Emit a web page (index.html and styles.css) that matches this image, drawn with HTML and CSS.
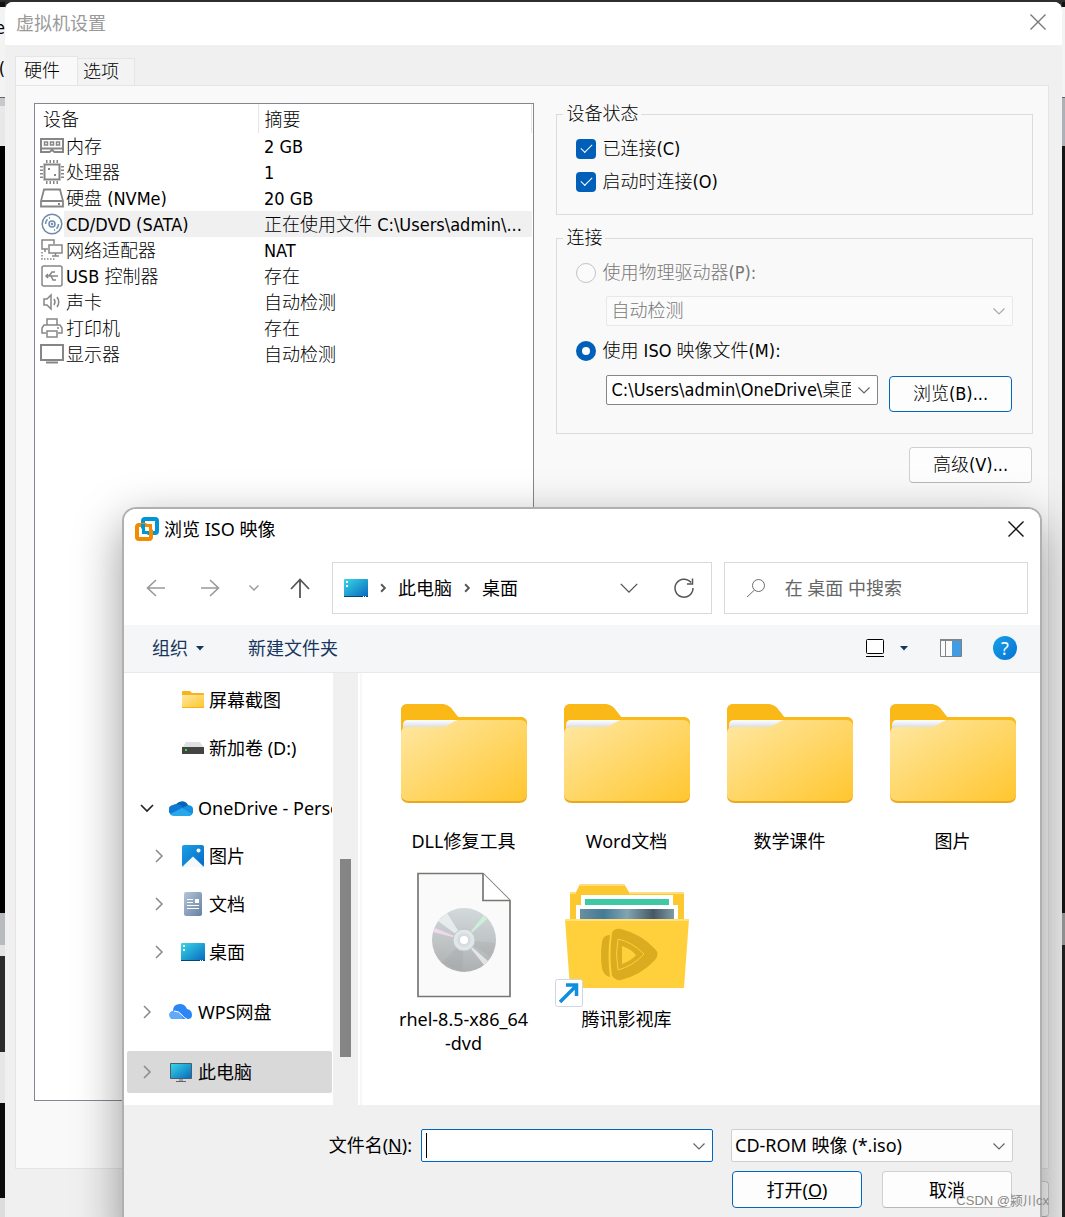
FILE: index.html
```html
<!DOCTYPE html>
<html lang="zh-CN">
<head>
    <meta charset="UTF-8">
    <meta name="viewport" content="width=device-width, initial-scale=1.0">
    <title>虚拟机设置</title>
    <link rel="stylesheet" href="styles.css">
</head>
<body>
    <!-- shared drawings -->
    <svg class="defs" width="0" height="0" aria-hidden="true">
        <defs>
            <linearGradient id="g-folder" x1="0" y1="0" x2="1" y2="1">
                <stop offset="0" stop-color="#ffe8a3"/>
                <stop offset="1" stop-color="#ffc62f"/>
            </linearGradient>
            <linearGradient id="g-paper" x1="0" y1="0" x2="0" y2="1">
                <stop offset="0" stop-color="#ffffff"/>
                <stop offset=".4" stop-color="#d3d9e0"/>
            </linearGradient>
            <linearGradient id="g-desk" x1="0" y1="0" x2="1" y2="1">
                <stop offset="0" stop-color="#38d8e8"/>
                <stop offset="1" stop-color="#0767bd"/>
            </linearGradient>
            <linearGradient id="g-blue" x1="0" y1="0" x2="1" y2="1">
                <stop offset="0" stop-color="#1ba0e8"/>
                <stop offset="1" stop-color="#0668c4"/>
            </linearGradient>
            <linearGradient id="g-doc" x1="0" y1="0" x2="1" y2="1">
                <stop offset="0" stop-color="#b4c5d8"/>
                <stop offset="1" stop-color="#6581a3"/>
            </linearGradient>
            <linearGradient id="g-disc" x1="0" y1="0" x2="0" y2="1">
                <stop offset="0" stop-color="#d3dadb"/>
                <stop offset="1" stop-color="#adb0b1"/>
            </linearGradient>
            <linearGradient id="g-film" x1="0" y1="0" x2="1" y2="0">
                <stop offset="0" stop-color="#6a8ea0"/>
                <stop offset=".25" stop-color="#437b96"/>
                <stop offset=".5" stop-color="#82a4b4"/>
                <stop offset=".78" stop-color="#455964"/>
                <stop offset="1" stop-color="#7f9ba8"/>
            </linearGradient>
            <symbol id="i-folder" viewBox="0 0 128 128">
                <path d="M1 40V18q0-7 7-7h32q7 0 11 4l7 9h62q7 0 7 7v71q0 8-8 8H9q-8 0-8-8z" fill="#e9a91f"/>
                <path d="M1 40V18q0-7 7-7h32q7 0 11 4l7 9h62q7 0 7 7v20H1z" fill="#fbb917"/>
                <path d="M3 48V32q0-5 5-5h50l-8 10z" fill="url(#g-paper)"/>
                <path d="M1 40q0-6 7-6h33q5 0 9-3l5-3q2-1 5-1h60q7 0 7 7v67q0 7-8 7H9q-8 0-8-7z" fill="url(#g-folder)"/>
            </symbol>
            <symbol id="i-desk" viewBox="0 0 24 24">
                <rect y="3" width="24" height="18" rx="1" fill="url(#g-desk)"/>
                <path d="M0 20h24v1H0z" fill="#0a4278"/>
                <path d="M2 5h2v2H2zM2 9h2v2H2zM19 20h1v1h-1zM21 20h1v1h-1z" fill="#fff"/>
            </symbol>
            <symbol id="i-down" viewBox="0 0 16 16">
                <path d="M2.500 5.500 8 11l5.500-5.500" fill="none" stroke="currentColor" stroke-width="1.200"/>
            </symbol>
            <symbol id="i-right" viewBox="0 0 16 16">
                <path d="M5 2l6 6-6 6" fill="none" stroke="currentColor" stroke-width="1.500"/>
            </symbol>
            <symbol id="i-close" viewBox="0 0 16 16">
                <path d="M.5.5l15 15M15.500.5l-15 15" fill="none" stroke="currentColor" stroke-width="1.400"/>
            </symbol>
        </defs>
    </svg>

    <div class="desktop">
        <div class="strip strip-left" aria-hidden="true"><span>e</span><span>(</span></div>

        <main class="settings">
            <header class="settings-title">
                <h1>虚拟机设置</h1>
                <button class="icon-btn" type="button" aria-label="关闭"><svg width="16" height="16"><use href="#i-close"/></svg></button>
            </header>

            <div class="tabs" role="tablist">
                <button class="tab active" type="button" role="tab" aria-selected="true">硬件</button>
                <button class="tab" type="button" role="tab" aria-selected="false">选项</button>
            </div>

            <div class="panel">
                <div class="devices">
                    <table>
                        <thead>
                            <tr><th class="name-col">设备</th><th>摘要</th></tr>
                        </thead>
                        <tbody>
                            <tr>
                                <td><div class="dev"><svg width="24" height="24" viewBox="0 0 24 24" fill="none" stroke="#868686" stroke-width="2"><path d="M1 5h22v13h-8.500l-2.500-2-2.500 2H1zM1 14.500h22"/><path d="M4.500 8h3v3h-3zM10.500 8h3v3h-3zM16.500 8h3v3h-3z" stroke-width="1.500"/></svg><span>内存</span></div></td>
                                <td>2 GB</td>
                            </tr>
                            <tr>
                                <td><div class="dev"><svg width="24" height="24" viewBox="0 0 24 24" fill="none" stroke="#868686" stroke-width="2"><path d="M4.500 4.500h15v15h-15z"/><path d="M6 1.500h13M6 22.500h13M1.500 6v13M22.500 6v13" stroke-width="3" stroke-dasharray="1.500 2"/><path d="M8 9h2M14 15h2"/></svg><span>处理器</span></div></td>
                                <td>1</td>
                            </tr>
                            <tr>
                                <td><div class="dev"><svg width="24" height="24" viewBox="0 0 24 24" fill="none" stroke="#868686" stroke-width="1.800"><path d="M4 3.500h16l3 11.500v5.500H1V15zM1 15h22M18 18h2"/></svg><span>硬盘 (NVMe)</span></div></td>
                                <td>20 GB</td>
                            </tr>
                            <tr class="selected">
                                <td><div class="dev"><svg width="24" height="24" viewBox="0 0 24 24" fill="none" stroke="#6d8ca8" stroke-width="1.500"><circle cx="12" cy="12" r="9.800"/><circle cx="12" cy="12" r="3"/><circle cx="12" cy="12" r=".5"/><path d="M5.500 12a6.500 6.500 0 0 1 2-4.700M9 6.200l1-.4M18.500 12a6.500 6.500 0 0 1-2 4.700M15 17.800l-1 .4"/></svg><span>CD/DVD (SATA)</span></div></td>
                                <td>正在使用文件 C:\Users\admin\...</td>
                            </tr>
                            <tr>
                                <td><div class="dev"><svg width="24" height="24" viewBox="0 0 24 24" fill="none" stroke="#868686" stroke-width="1.500"><path d="M8 11H2V2h12v4M5 14v-3M9 7h13v8H9zM15.500 15v3M12 18h7"/><path d="M2 14v7h13" stroke-dasharray="1.500 1.500"/></svg><span>网络适配器</span></div></td>
                                <td>NAT</td>
                            </tr>
                            <tr>
                                <td><div class="dev"><svg width="24" height="24" viewBox="0 0 24 24" fill="none" stroke="#868686" stroke-width="1.500"><rect x="2" y="2" width="20" height="20" rx="2"/><path d="M6 12h12M9 12l3-4h3M11 12l2 4h3M8 10l-2 2 2 2"/></svg><span>USB 控制器</span></div></td>
                                <td>存在</td>
                            </tr>
                            <tr>
                                <td><div class="dev"><svg width="24" height="24" viewBox="0 0 24 24" fill="none" stroke="#868686" stroke-width="1.500"><path d="M4 9h3l4-4v14l-4-4H4zM14 9q2 3 0 6M17 7q3.500 5 0 10"/></svg><span>声卡</span></div></td>
                                <td>自动检测</td>
                            </tr>
                            <tr>
                                <td><div class="dev"><svg width="24" height="24" viewBox="0 0 24 24" fill="none" stroke="#868686" stroke-width="1.500"><path d="M7 9V3h10v6M6 17H2v-5l2-3h16l2 3v5h-4M7 15h10v6H7zM17 12h2"/></svg><span>打印机</span></div></td>
                                <td>存在</td>
                            </tr>
                            <tr>
                                <td><div class="dev"><svg width="24" height="24" viewBox="0 0 24 24" fill="none" stroke="#868686" stroke-width="2"><path d="M1 3h22v15H1zM6 20.500h12"/></svg><span>显示器</span></div></td>
                                <td>自动检测</td>
                            </tr>
                        </tbody>
                    </table>
                </div>

                <form class="options">
                    <fieldset class="status">
                        <legend>设备状态</legend>
                        <label class="choice"><input type="checkbox" checked><span>已连接(C)</span></label>
                        <label class="choice"><input type="checkbox" checked><span>启动时连接(O)</span></label>
                    </fieldset>
                    <fieldset class="connect">
                        <legend>连接</legend>
                        <label class="choice disabled"><input type="radio" name="source" disabled><span>使用物理驱动器(P):</span></label>
                        <div class="combo drive">
                            <select aria-label="物理驱动器" disabled><option>自动检测</option></select>
                            <svg width="16" height="16"><use href="#i-down"/></svg>
                        </div>
                        <label class="choice"><input type="radio" name="source" checked><span>使用 ISO 映像文件(M):</span></label>
                        <div class="iso-row">
                            <div class="combo iso">
                                <input type="text" aria-label="ISO 映像文件" value="C:\Users\admin\OneDrive\桌面">
                                <svg width="16" height="16"><use href="#i-down"/></svg>
                            </div>
                            <button class="btn primary" type="button">浏览(B)...</button>
                        </div>
                    </fieldset>
                    <button class="btn advanced" type="button">高级(V)...</button>
                </form>
            </div>
            <footer class="settings-footer"><button class="btn" type="button" aria-label="帮助"></button></footer>
        </main>

        <div class="strip strip-right" aria-hidden="true"></div>
    </div>

    <section class="browse" role="dialog" aria-labelledby="browse-title">
        <header class="browse-title">
            <svg width="24" height="24" viewBox="0 0 24 24" fill="none" stroke-width="4"><rect x="8" y="2" width="14" height="14" rx="2" stroke="#0095d3"/><rect x="2" y="8" width="14" height="14" rx="2" stroke="#f38b00"/><path d="M8 7v7.500q0 1.500 1.500 1.500H14" stroke="#0095d3"/><path d="M6.500 11.500v6h6M11.500 6.500h6v6" stroke="#fff" stroke-width="1"/></svg>
            <h2 id="browse-title">浏览 ISO 映像</h2>
            <button class="icon-btn" type="button" aria-label="关闭"><svg width="16" height="16"><use href="#i-close"/></svg></button>
        </header>

        <nav class="nav">
            <div class="nav-buttons">
                <button class="icon-btn muted" type="button" aria-label="后退"><svg width="24" height="24" viewBox="0 0 24 24" fill="none" stroke="currentColor" stroke-width="1.600"><path d="M21 12H4M12 4l-8.500 8 8.500 8"/></svg></button>
                <button class="icon-btn muted" type="button" aria-label="前进"><svg width="24" height="24" viewBox="0 0 24 24" fill="none" stroke="currentColor" stroke-width="1.600"><path d="M3 12h17M12 4l8.500 8-8.500 8"/></svg></button>
                <button class="icon-btn muted recent" type="button" aria-label="最近浏览的位置"><svg width="12" height="12" viewBox="0 0 12 12"><path d="M1.500 3.500 6 8l4.500-4.500" fill="none" stroke="currentColor" stroke-width="1.400"/></svg></button>
                <button class="icon-btn" type="button" aria-label="上移"><svg width="24" height="24" viewBox="0 0 24 24" fill="none" stroke="currentColor" stroke-width="1.800"><path d="M12 22V4M3 13l9-9.500 9 9.500"/></svg></button>
            </div>
            <div class="address">
                <svg width="24" height="24"><use href="#i-desk"/></svg>
                <svg class="sep" width="10" height="10" viewBox="0 0 16 16"><path d="M5 2l6 6-6 6" fill="none" stroke="#555" stroke-width="3"/></svg>
                <a href="#">此电脑</a>
                <svg class="sep" width="10" height="10" viewBox="0 0 16 16"><path d="M5 2l6 6-6 6" fill="none" stroke="#555" stroke-width="3"/></svg>
                <a href="#">桌面</a>
                <button class="icon-btn history" type="button" aria-label="以前的位置"><svg width="22" height="22" viewBox="0 0 16 16"><path d="M2 5l6 6 6-6" fill="none" stroke="currentColor"/></svg></button>
                <button class="icon-btn" type="button" aria-label="刷新"><svg width="24" height="24" viewBox="0 0 24 24" fill="none" stroke="currentColor" stroke-width="1.500"><path d="M19 6.500A9 9 0 1 0 21 12M20.500 2.500V8H15"/></svg></button>
            </div>
            <div class="search">
                <svg width="20" height="20" viewBox="0 0 20 20" fill="none" stroke="#6b6b6b"><circle cx="12.500" cy="7.500" r="6"/><path d="M8.500 12 1 19"/></svg>
                <input type="search" aria-label="搜索" placeholder="在 桌面 中搜索">
            </div>
        </nav>

        <div class="toolbar">
            <button class="tool" type="button">组织 <svg width="8" height="5" viewBox="0 0 8 5"><path d="M0 0h8L4 4.500z" fill="currentColor"/></svg></button>
            <button class="tool new" type="button">新建文件夹</button>
            <button class="icon-btn view" type="button" aria-label="更改视图">
                <svg width="20" height="20" viewBox="0 0 20 20" fill="#fff" stroke="#000"><rect x="1.500" y="1.500" width="17" height="14" rx="1"/><path d="M1 18.500h18"/></svg>
                <svg width="8" height="5" viewBox="0 0 8 5"><path d="M0 0h8L4 4.500z" fill="#17365d"/></svg>
            </button>
            <button class="icon-btn" type="button" aria-label="预览窗格"><svg width="22" height="18" viewBox="0 0 22 18"><path d="M.5.5h21v17H.5z" fill="#fafafa" stroke="#808080"/><path d="M0 0h22v2H0zM5 2h1v15H5z" fill="#858585"/><path d="M12 2h9v15h-9z" fill="#429ce3"/></svg></button>
            <button class="help" type="button" aria-label="帮助">?</button>
        </div>

        <div class="content">
            <div class="tree">
                <a class="node child" href="#"><i></i><svg width="24" height="24" viewBox="0 0 24 24"><path d="M1 20V4q0-1 1-1h7l2 2h11q1 0 1 1v14z" fill="#f6b31c"/><path d="M1 7h22v12H1z" fill="url(#g-folder)"/></svg><span>屏幕截图</span></a>
                <a class="node child" href="#"><i></i><svg width="24" height="24" viewBox="0 0 24 24"><path d="M5 6h14l4 6H1z" fill="#dfe0e2"/><path d="M1 11h22v7H1z" fill="#444"/><path d="M4 13h2v2H4z" fill="#2be32b"/></svg><span>新加卷 (D:)</span></a>
                <a class="node top open" href="#"><svg class="arrow" width="16" height="16" viewBox="0 0 16 16"><path d="M2 5l6 6 6-6" fill="none" stroke="#222" stroke-width="1.600"/></svg><svg width="24" height="24" viewBox="0 0 24 24"><path d="M6 11a7 7 0 0 1 13-2l1 5H8z" fill="#0364b8"/><path d="M5 19a5 5 0 0 1-1-10q3-2 7 0l9 6z" fill="#0f78d4"/><path d="M19 9a5 5 0 0 1 0 11h-8l-3-5z" fill="#1490df"/><path d="M5 20q-3 0-4-2l12-6 10 6q-1 2-4 2z" fill="#28a8ea"/></svg><span>OneDrive - Personal</span></a>
                <a class="node child" href="#"><svg class="arrow" width="16" height="16"><use href="#i-right"/></svg><svg width="24" height="24" viewBox="0 0 24 24"><rect x="1" y="1" width="22" height="22" rx="2" fill="url(#g-blue)"/><path d="M2 22l10-9.500L22 22q0 1-1 1H3q-1 0-1-1z" fill="#f4f9fe"/><circle cx="17.500" cy="6.500" r="2" fill="#fff"/></svg><span>图片</span></a>
                <a class="node child" href="#"><svg class="arrow" width="16" height="16"><use href="#i-right"/></svg><svg width="24" height="24" viewBox="0 0 24 24"><rect x="3" width="18" height="24" rx="2" fill="url(#g-doc)"/><path d="M6 7h6v1H6zM6 10h6v1H6zM6 13h12v1H6zM6 16h12v1H6zM14 7h4v4h-4z" fill="#fff"/></svg><span>文档</span></a>
                <a class="node child" href="#"><svg class="arrow" width="16" height="16"><use href="#i-right"/></svg><svg width="24" height="24"><use href="#i-desk"/></svg><span>桌面</span></a>
                <a class="node top" href="#"><svg class="arrow" width="16" height="16"><use href="#i-right"/></svg><svg width="24" height="24" viewBox="0 0 24 24"><path d="M5 19a4 4 0 0 1-1-8q0-7 7-7 5 0 7 5 5 1 5 6 0 4-4 4z" fill="#2c86f5"/><path d="M4 11q8-2 10 8H5a4 4 0 0 1-1-8z" fill="#62a9fa"/><path d="M5 11q5 0 8 4t5 4" fill="none" stroke="#fff"/></svg><span>WPS网盘</span></a>
                <a class="node top current" href="#"><svg class="arrow" width="16" height="16"><use href="#i-right"/></svg><svg width="24" height="24" viewBox="0 0 24 24"><path d="M1.500 3.500h21v15h-21z" fill="url(#g-desk)" stroke="#4b5d6b"/><path d="M10 19h4v2h-4z" fill="#9aa4ab"/><path d="M7 21h10v1H7z" fill="#59646c"/></svg><span>此电脑</span></a>
            </div>
            <div class="scrollbar"><div class="thumb"></div></div>
            <div class="files">
                <a class="file" href="#"><svg width="128" height="128"><use href="#i-folder"/></svg><span>DLL修复工具</span></a>
                <a class="file" href="#"><svg width="128" height="128"><use href="#i-folder"/></svg><span>Word文档</span></a>
                <a class="file" href="#"><svg width="128" height="128"><use href="#i-folder"/></svg><span>数学课件</span></a>
                <a class="file" href="#"><svg width="128" height="128"><use href="#i-folder"/></svg><span>图片</span></a>
                <a class="file" href="#">
                    <svg width="128" height="128" viewBox="0 0 128 128">
                        <path d="M18 2.500h65l27 27V125.500H18z" fill="#fafafa" stroke="#777772" stroke-width="1.700"/>
                        <path d="M83 2.500v27h27" fill="#fff" stroke="#777772" stroke-width="1.700"/>
                        <circle cx="64" cy="69" r="32" fill="url(#g-disc)"/>
                        <path d="M64 69L47 42l-9 8zM64 69l20 25 4-4z" fill="#f5f6f6" opacity=".7"/>
                        <path d="M64 69L35 57l-2 4z" fill="#f0d9ee"/>
                        <path d="M64 69l23-21-3-4z" fill="#cdeed8"/>
                        <path d="M64 69l32 3-5 14zM64 69L42 92l20 9z" fill="#8b8f90" opacity=".15"/>
                        <circle cx="64" cy="69" r="11" fill="#e1e7e9" stroke="#c1c7c9"/>
                        <circle cx="64" cy="69" r="7" fill="#d6dddf"/>
                        <circle cx="64" cy="69" r="4" fill="#fff"/>
                    </svg>
                    <span>rhel-8.5-x86_64<br>-dvd</span>
                </a>
                <a class="file" href="#">
                    <svg width="144" height="128" viewBox="0 0 144 128">
                        <path d="M15 50V21h6l4-8h44l5 8h55v29z" fill="#fdc82f"/>
                        <path d="M25 14h44M15 22h6M74 22h55" stroke="#ffdc7d" stroke-width="2"/>
                        <path d="M26 24h92v18H26z" fill="#fff"/>
                        <path d="M30 28h84v6H30z" fill="#3ec9a4"/>
                        <path d="M21 34h102v16H21z" fill="#fff"/>
                        <path d="M25 38h94v11H25z" fill="url(#g-film)"/>
                        <path d="M10 48h124l-5 69H15z" fill="#ffd03c"/>
                        <path d="M10 49h124" stroke="#ffe07a" stroke-width="2"/>
                        <path d="M55 64q-7 0-8 7-2 13 0 26 1 7 8 9-3-21 0-42z" fill="#dbab20"/>
                        <path d="M57 62q2-5 9-4 20 5 34 20 5 5 0 11-14 15-34 20-5 1-9-4-3-21 0-43z" fill="#dbab20"/>
                        <path d="M63 68q14 3 26 15-11 12-26 16-3-16 0-31z" fill="none" stroke="#ffd03c"/>
                        <path d="M67 75v18q9-3 14-9-5-6-14-9z" fill="#ffd03c"/>
                    </svg>
                    <svg class="shortcut" width="28" height="28" viewBox="0 0 28 28"><rect x=".5" y=".5" width="27" height="27" rx="2" fill="#fff" stroke="#ccd6e4"/><path d="M5 23L20 8M11 6h10.500v11" fill="none" stroke="#0e8ee0" stroke-width="3.500"/></svg>
                    <span>腾讯影视库</span>
                </a>
            </div>
        </div>

        <form class="browse-footer">
            <label for="filename">文件名(<u>N</u>):</label>
            <div class="combo filename">
                <input type="text" id="filename">
                <svg width="16" height="16"><use href="#i-down"/></svg>
            </div>
            <div class="combo type">
                <select aria-label="文件类型"><option>CD-ROM 映像 (*.iso)</option></select>
                <svg width="16" height="16"><use href="#i-down"/></svg>
            </div>
            <div class="actions">
                <button class="btn primary" type="button">打开(<u>O</u>)</button>
                <button class="btn" type="button">取消</button>
            </div>
        </form>
    </section>
    <div class="watermark">CSDN @颍川cx</div>
</body>
</html>
```
FILE: styles.css
```css
* {
    box-sizing: border-box;
}
body {
    margin: 0;
    height: 100vh;
    position: relative;
    overflow: hidden;
    font-family: "DejaVu Sans Condensed", "DejaVu Sans", "Noto Sans CJK SC", sans-serif;
    font-size: 18px;
    line-height: 26px;
    color: #000;
    background-color: #2f2d2e;
}
.defs {
    position: absolute;
}
h1, h2 {
    margin: 0;
    font-size: 18px;
    font-weight: normal;
}
a {
    color: inherit;
    text-decoration: none;
}
svg {
    flex: none;
    display: block;
}
button, input, select {
    font: inherit;
    color: inherit;
}
.icon-btn {
    display: flex;
    align-items: center;
    padding: 0;
    border: 0;
    background: none;
    color: #555;
}
.btn {
    width: 123px;
    height: 36px;
    padding: 0;
    border: 1px solid #d0d0d0;
    border-bottom-color: #b8b8b8;
    border-radius: 4px;
    background-color: #fdfdfd;
}
.btn.primary {
    border-color: #0067c0;
}

/* Windows behind the dialog */
.desktop {
    display: flex;
    height: 100%;
    padding-top: 2px;
}
.strip {
    overflow: hidden;
}
.strip-left {
    width: 5px;
    background: linear-gradient(#111 5px, #f3f3f3 5px 95px, #666 95px 96px, #c6c8cc 96px 104px, #e8e8e8 104px 144px, #000 144px 911px, #b8babd 911px 943px, #e4e4e4 943px 954px, #2b2b2b 954px 1050px, #e6e6e6 1050px 1101px, #0c0c0c 1101px 1196px, #ddd 1196px);
}
.strip-left span {
    display: flex;
    justify-content: flex-end;
    margin-top: 13px;
    padding-bottom: 2px;
}
.strip-right {
    width: 3px;
    background: linear-gradient(#111 5px, #f3f3f3 5px 95px, #666 95px 96px, #adb0b5 96px 144px, #151515 144px 911px, #9a9a9a 911px 943px, #222 943px);
}

/* Settings window */
.settings {
    flex: 1;
    display: flex;
    flex-direction: column;
    border-radius: 8px 8px 0 0;
    overflow: hidden;
    background-color: #f0f0f0;
}
.settings-title {
    display: flex;
    justify-content: space-between;
    align-items: center;
    height: 43px;
    padding: 0 16px 4px 11px;
    background-color: #fff;
    color: #999;
    font-family: "Noto Sans CJK SC", sans-serif;
}
.settings-title .icon-btn {
    color: #777;
}
.tabs {
    display: flex;
    align-items: flex-end;
    padding: 11px 0 0 10px;
}
.tab {
    height: 27px;
    width: 57px;
    padding: 0 0 0 5px;
    border: 1px solid #e5e5e5;
    border-left: 0;
    border-bottom: 0;
    background-color: #f3f3f3;
    text-align: left;
    font-weight: 300;
}
.tab.active {
    height: 30px;
    width: 63px;
    padding: 0 0 2px 8px;
    margin-bottom: -1px;
    border-left: 1px solid #e5e5e5;
    background-color: #f9f9f9;
}
.panel {
    flex: 1;
    display: flex;
    gap: 22px;
    margin: 0 13px 0 10px;
    padding: 17px 15px 67px 18px;
    border: 1px solid #e5e5e5;
    background-color: #f9f9f9;
    font-weight: 300;
}
.devices {
    flex: 499;
    min-width: 0;
    padding-right: 1px;
    border: 1px solid #828790;
    background-color: #fff;
}
.devices table {
    width: 100%;
    table-layout: fixed;
    border-collapse: collapse;
}
.devices th {
    height: 29px;
    padding: 2px 8px 0;
    border-right: 1px solid #e5e5e5;
    text-align: left;
    font-weight: 300;
}
.devices .name-col {
    width: 223px;
}
.devices th + th {
    padding-left: 6px;
}
.devices td {
    height: 26px;
    padding: 2px 0 0 6px;
    line-height: 24px;
    white-space: nowrap;
    overflow: hidden;
}
.devices td:first-child {
    padding: 0 0 0 5px;
}
.dev {
    display: flex;
    align-items: center;
}
.dev span {
    flex: 1;
    padding: 2px 0 0 2px;
}
.selected td + td,
.selected .dev span {
    background-color: #f0f0f0;
}
.settings-footer {
    display: flex;
    justify-content: flex-end;
    height: 48px;
    padding: 12px 13px 0;
}

/* Right column */
.options {
    flex: 478;
    min-width: 0;
}
fieldset {
    margin: 0 0 12px;
    padding: 0 19px;
    border: 1px solid #dcdcdc;
    min-width: 0;
}
legend {
    margin-left: -13px;
    padding: 0 3px;
    line-height: 22px;
}
.status {
    height: 112px;
}
.connect {
    height: 207px;
}
.choice {
    display: flex;
    align-items: center;
    gap: 6px;
    height: 33px;
}
legend + .choice {
    margin-top: 7px;
}
.choice.disabled {
    color: #777;
}
.choice input {
    appearance: none;
    width: 20px;
    height: 20px;
    margin: 0;
    background-color: #005fb8;
}
.choice input[type="checkbox"] {
    display: grid;
    border-radius: 4px;
}
.choice input[type="checkbox"]::after {
    content: "";
    place-self: center;
    width: 10px;
    height: 5px;
    margin-top: -3px;
    border: solid #fff;
    border-width: 0 0 1px 1px;
    transform: rotate(-45deg);
}
.choice input[type="radio"] {
    border: 6px solid #005fb8;
    border-radius: 50%;
    background-color: #fff;
}
.choice input[type="radio"]:disabled {
    border: 1px solid #c3c3c3;
    background-color: #fbfbfb;
}
.combo {
    display: grid;
    grid-template-columns: minmax(0, 1fr) 26px;
    align-items: center;
    border: 1px solid #d0d0d0;
    border-radius: 2px;
    background-color: #fdfdfd;
    color: #666;
}
.combo select,
.combo input {
    grid-row: 1;
    grid-column: 1;
    appearance: none;
    width: 100%;
    height: 28px;
    padding: 0 0 0 4px;
    border: 0;
    outline: 0;
    background: none;
    color: #000;
}
.combo select {
    grid-column: 1 / 3;
}
.combo svg {
    grid-row: 1;
    grid-column: 2;
    margin-left: 5px;
    pointer-events: none;
}
.drive {
    margin: 7px 0 8px 30px;
    border-color: #e8e8e8;
    background-color: #fbfbfb;
    color: #aaa;
}
.drive select {
    color: #777;
    opacity: 1;
}
.iso-row {
    display: flex;
    gap: 11px;
    margin: 8px 1px 0 30px;
}
.iso {
    flex: 1;
    height: 30px;
    border-color: #868686;
    background-color: #fff;
}
.iso input {
    padding-bottom: 4px;
}
.iso + .btn {
    margin-top: 1px;
}
.advanced {
    display: block;
    margin: 13px 1px 0 auto;
}

/* File browser window, lies over the settings */
.browse {
    position: absolute;
    top: 507px;
    left: 122px;
    right: 23px;
    bottom: -24px;
    display: flex;
    flex-direction: column;
    border: 2px solid #b0b0b0;
    border-radius: 14px 14px 0 0;
    overflow: hidden;
    background-color: #f0f0f0;
    box-shadow: 0 16px 48px rgba(0, 0, 0, 0.4);
    font-family: "Noto Sans", "Noto Sans CJK SC", sans-serif;
    line-height: 24px;
}
.browse-title {
    display: flex;
    align-items: center;
    gap: 5px;
    height: 40px;
    padding: 0 16px 0 11px;
    background-color: #fff;
}
.browse-title .icon-btn {
    margin-left: auto;
    color: #111;
}
.nav {
    display: flex;
    gap: 12px;
    padding: 13px 12px 11px 20px;
    background-color: #fff;
}
.nav-buttons {
    display: flex;
    gap: 30px;
    width: 176px;
}
.muted {
    color: #999;
}
.recent {
    margin: 0 -2px 0 -4px;
}
.address, .search {
    display: flex;
    align-items: center;
    min-width: 0;
    height: 52px;
    border: 1px solid #d9d9d9;
}
.address {
    flex: 380;
    gap: 10px;
    padding: 0 15px 0 11px;
}
.history {
    margin-left: auto;
    margin-right: 22px;
}
.search {
    flex: 304;
    gap: 19px;
    padding-left: 21px;
}
.search input {
    flex: 1;
    min-width: 0;
    padding: 0;
    border: 0;
    outline: 0;
    background: none;
}
.search input::placeholder {
    color: #666;
}
.toolbar {
    display: flex;
    align-items: center;
    gap: 28px;
    height: 48px;
    padding: 0 23px 1px 28px;
    border-bottom: 1px solid #e8e8e8;
    background-color: #f4f6f8;
}
.tool {
    display: flex;
    align-items: center;
    gap: 8px;
    padding: 0;
    border: 0;
    background: none;
    color: #17365d;
}
.new {
    margin-left: 16px;
}
.view {
    gap: 15px;
    margin-left: auto;
}
.toolbar .view + .icon-btn {
    margin-left: 4px;
}
.help {
    width: 24px;
    height: 24px;
    margin-left: 3px;
    padding: 0;
    border: 0;
    border-radius: 50%;
    background: linear-gradient(135deg, #1ba0e8, #0474d4);
    color: #fff;
}
.content {
    display: flex;
    height: 432px;
    background-color: #fff;
}
.tree {
    width: 209px;
    padding: 3px 1px 0 3px;
    overflow: hidden;
}
.node {
    display: flex;
    align-items: center;
    gap: 5px;
    height: 42px;
    margin: 3px 0 6px;
    border-radius: 2px;
    white-space: nowrap;
    overflow: hidden;
}
.node .arrow {
    color: #8a8a8a;
    margin-right: 9px;
}
.child {
    gap: 4px;
    padding-left: 24px;
}
.child .arrow {
    margin-right: 10px;
}
.child i {
    width: 26px;
}
.top {
    gap: 5px;
    padding-left: 12px;
    margin-top: 18px;
}
.current {
    background-color: #d9d9d9;
}
.scrollbar {
    width: 25px;
    padding: 186px 7px 0;
    background-color: #f0f0f0;
}
.thumb {
    height: 198px;
    background-color: #858585;
}
.files {
    flex: 1;
    display: grid;
    grid-template-columns: repeat(auto-fill, 163px);
    align-content: start;
    gap: 18px 0;
    margin-left: 2px;
    padding: 20px 0 0 20px;
    border-left: 2px solid #f7f7f7;
}
.file {
    display: flex;
    flex-direction: column;
    align-items: center;
    gap: 8px;
    position: relative;
    height: 160px;
    text-align: center;
}
.shortcut {
    position: absolute;
    left: 10px;
    top: 108px;
}
.browse-footer {
    display: grid;
    grid-template-columns: minmax(0, 279fr) minmax(0, 292fr) minmax(0, 282fr);
    gap: 9px 18px;
    padding: 24px 27px 0 0;
}
.browse-footer label {
    margin-right: -9px;
    padding-top: 4px;
    text-align: right;
}
.browse-footer .combo {
    height: 33px;
}
.filename {
    position: relative;
    border-color: #0067c0;
    background-color: #fff;
}
/* text cursor */
.filename::before {
    content: "";
    position: absolute;
    left: 4px;
    top: 3px;
    width: 1px;
    height: 25px;
    background-color: #000;
}
.type select {
    padding: 0 0 2px 3px;
}
.actions {
    grid-column: 3;
    display: flex;
    gap: 20px;
    padding: 0 1px;
}
.actions .btn {
    flex: 1;
    height: 37px;
}
.watermark {
    position: absolute;
    right: 16px;
    bottom: 6px;
    font-family: "Liberation Sans", "Noto Sans CJK SC", sans-serif;
    font-size: 13px;
    line-height: 20px;
    color: #888;
}
```
